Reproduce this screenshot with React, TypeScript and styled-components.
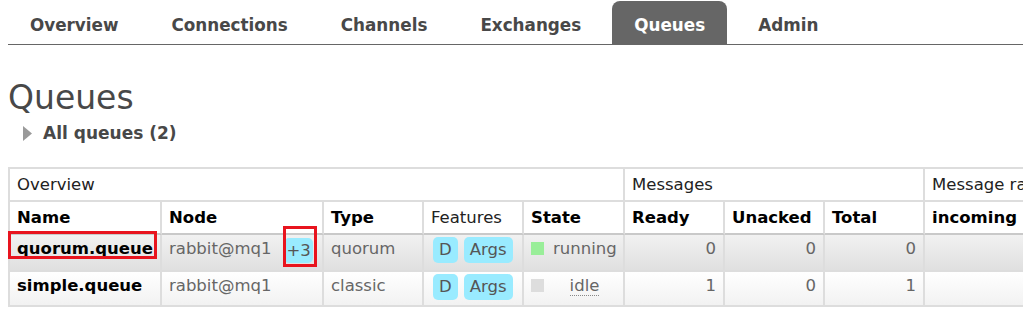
import React from "react";
import styled, { createGlobalStyle } from "styled-components";

const Global = createGlobalStyle`
  html, body { overflow: hidden; }
  body {
    margin: 0 0 0 8px;
    background: #fff;
    font-family: "DejaVu Sans", Verdana, sans-serif;
    font-size: 16.5px;
    color: #484848;
  }
`;

const Page = styled.div`
  width: 1015px;
  overflow: hidden;
`;

const Nav = styled.ul`
  list-style: none;
  margin: 1px 0 0;
  padding: 0;
  display: flex;
  gap: 9px;
  border-bottom: 1px solid #666;
`;

const Tab = styled.li<{ $active?: boolean }>`
  height: 43px;
  box-sizing: border-box;
  padding: 14px 22px 0;
  line-height: 20px;
  font-weight: bold;
  font-size: 16.8px;
  color: ${(p) => (p.$active ? "#fff" : "#484848")};
  background: ${(p) => (p.$active ? "#666" : "transparent")};
  border-radius: 8px 8px 0 0;
  white-space: nowrap;
`;

const Title = styled.h1`
  margin: 33px 0 0;
  font-size: 33px;
  line-height: 40px;
  font-weight: normal;
  color: #484848;
`;

const Toggle = styled.div`
  margin: 5px 0 0 15px;
  display: flex;
  align-items: center;
  gap: 11px;
  height: 20px;
  font-size: 17px;
  line-height: 20px;
  font-weight: bold;
  color: #484848;
`;

const Table = styled.table`
  margin-top: 24px;
  border-collapse: separate;
  border-spacing: 0;
  table-layout: fixed;
  width: 1367px;
  border-top: 2px solid #ddd;
  border-left: 2px solid #ddd;
`;

const GroupCell = styled.th`
  box-sizing: border-box;
  height: 33px;
  padding: 0 7px;
  border-right: 2px solid #ddd;
  border-bottom: 2px solid #ddd;
  text-align: left;
  font-weight: normal;
  color: #222;
  line-height: 20px;
  vertical-align: middle;
  white-space: nowrap;
`;

const HeadCell = styled.th<{ $plain?: boolean }>`
  box-sizing: border-box;
  height: 33px;
  padding: 0 7px;
  border-right: 2px solid #ddd;
  border-bottom: 2px solid #c9c9c9;
  text-align: left;
  font-weight: ${(p) => (p.$plain ? "normal" : "bold")};
  color: ${(p) => (p.$plain ? "#222" : "#000")};
  line-height: 20px;
  vertical-align: middle;
  white-space: nowrap;
`;

const Row = styled.tr<{ $alt: 1 | 2 }>`
  background: ${(p) =>
    p.$alt === 1
      ? "linear-gradient(#f1f1f1, #dfdfdf)"
      : "linear-gradient(#ffffff, #f1f1f1)"};
`;

const Cell = styled.td<{ $h: number; $align?: "left" | "right"; $name?: boolean }>`
  position: relative;
  box-sizing: border-box;
  height: ${(p) => p.$h}px;
  padding: 4px 7px 0;
  border-right: 2px solid #ddd;
  border-bottom: 2px solid #ddd;
  vertical-align: top;
  text-align: ${(p) => p.$align ?? "left"};
  line-height: 20px;
  white-space: nowrap;
  font-weight: ${(p) => (p.$name ? "bold" : "normal")};
  color: ${(p) => (p.$name ? "#000" : "#666")};
`;

const FeatureCell = styled(Cell)`
  padding-top: 2px;
`;

const Inline = styled.div`
  display: flex;
  align-items: flex-start;
`;

const Tags = styled.div`
  display: flex;
  gap: 6px;
  margin-left: 2px;
`;

const Tag = styled.span`
  display: inline-flex;
  align-items: center;
  justify-content: center;
  height: 26px;
  padding: 0 6px;
  border-radius: 5px;
  background: #99ebff;
  color: #555;
`;

const Mirrors = styled.span`
  display: inline-flex;
  align-items: center;
  justify-content: center;
  height: 25px;
  margin: -1px 0 0 13px;
  padding: 0 2px;
  border-radius: 5px;
  background: #99ebff;
  color: #555;
`;

const Square = styled.span<{ $color: string }>`
  flex: none;
  width: 13px;
  height: 13px;
  margin: 3px 9px 0 0;
  background: ${(p) => p.$color};
`;

const StateLabel = styled.span`
  flex: 1;
  text-align: center;
`;

const Abbr = styled.abbr`
  text-decoration: none;
  border-bottom: 1px dotted #888;
`;

const Mark = styled.span<{ $l: number; $t: number; $w: number; $hh: number }>`
  position: absolute;
  left: ${(p) => p.$l}px;
  top: ${(p) => p.$t}px;
  width: ${(p) => p.$w}px;
  height: ${(p) => p.$hh}px;
  box-sizing: border-box;
  border: 3px solid #e8141e;
  pointer-events: none;
  z-index: 2;
`;

const widths = [152, 162, 100, 100, 101, 100, 100, 100, 150, 150, 150];

const queues = [
  { name: "quorum.queue", type: "quorum", state: "running", ready: 0, unacked: 0, total: 0, mirrors: true },
  { name: "simple.queue", type: "classic", state: "idle", ready: 1, unacked: 0, total: 1, mirrors: false },
];

export default function App() {
  return (
    <Page>
      <Global />
      <Nav>
        {["Overview", "Connections", "Channels", "Exchanges", "Queues", "Admin"].map((t) => (
          <Tab key={t} $active={t === "Queues"}>
            {t}
          </Tab>
        ))}
      </Nav>
      <Title>Queues</Title>
      <Toggle>
        <svg width="9" height="15" viewBox="0 0 9 15">
          <polygon points="0,0 9,7.5 0,15" fill="#9a9a9a" />
        </svg>
        All queues (2)
      </Toggle>
      <Table>
        <colgroup>
          {widths.map((w, i) => (
            <col key={i} style={{ width: w }} />
          ))}
        </colgroup>
        <thead>
          <tr>
            <GroupCell colSpan={5}>Overview</GroupCell>
            <GroupCell colSpan={3}>Messages</GroupCell>
            <GroupCell colSpan={3}>Message rates</GroupCell>
          </tr>
          <tr>
            <HeadCell>Name</HeadCell>
            <HeadCell>Node</HeadCell>
            <HeadCell>Type</HeadCell>
            <HeadCell $plain>Features</HeadCell>
            <HeadCell>State</HeadCell>
            <HeadCell>Ready</HeadCell>
            <HeadCell>Unacked</HeadCell>
            <HeadCell>Total</HeadCell>
            <HeadCell>incoming</HeadCell>
            <HeadCell>deliver / get</HeadCell>
            <HeadCell>ack</HeadCell>
          </tr>
        </thead>
        <tbody>
          {queues.map((q, i) => {
            const h = i === 0 ? 37 : 35;
            return (
              <Row key={q.name} $alt={i === 0 ? 1 : 2}>
                <Cell $h={h} $name>
                  {q.name}
                  {q.mirrors && <Mark $l={-2} $t={-4} $w={149} $hh={28} />}
                </Cell>
                <Cell $h={h}>
                  <Inline>
                    <span>rabbit@mq1</span>
                    {q.mirrors && <Mirrors>+3</Mirrors>}
                  </Inline>
                  {q.mirrors && <Mark $l={121} $t={-9} $w={34} $hh={41} />}
                </Cell>
                <Cell $h={h}>{q.type}</Cell>
                <FeatureCell $h={h}>
                  <Tags>
                    <Tag>D</Tag>
                    <Tag>Args</Tag>
                  </Tags>
                </FeatureCell>
                <Cell $h={h}>
                  <Inline>
                    <Square $color={q.state === "running" ? "#99ee99" : "#dddddd"} />
                    <StateLabel>
                      {q.state === "idle" ? <Abbr title="idle">idle</Abbr> : q.state}
                    </StateLabel>
                  </Inline>
                </Cell>
                <Cell $h={h} $align="right">{q.ready}</Cell>
                <Cell $h={h} $align="right">{q.unacked}</Cell>
                <Cell $h={h} $align="right">{q.total}</Cell>
                <Cell $h={h} />
                <Cell $h={h} />
                <Cell $h={h} />
              </Row>
            );
          })}
        </tbody>
      </Table>
    </Page>
  );
}
